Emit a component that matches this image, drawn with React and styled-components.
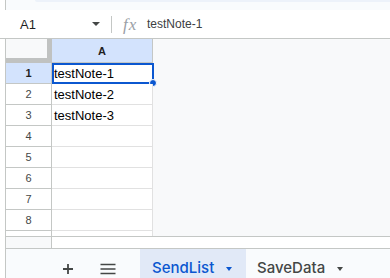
import React from "react";
import styled, { createGlobalStyle } from "styled-components";

const Global = createGlobalStyle`
  html, body { margin: 0; padding: 0; background: #ffffff; }
  body { font-family: "Liberation Sans", Arial, sans-serif; }
  * { box-sizing: border-box; }
`;

const LINE = "#c4c7c5";
const GRID = "#e1e1e1";
const SEL_BG = "#d3e3fd";
const BLUE = "#0b57d0";

const Page = styled.div`
  width: 390px;
  height: 278px;
  overflow: hidden;
  display: flex;
  flex-direction: column;
`;

const TopStrip = styled.div`
  height: 10px;
  margin-left: 5px;
  border-left: 1px solid ${LINE};
  background: #f9fbfd;
  display: flex;
  padding-left: 29px;
`;

const Pill = styled.div`
  flex: 1;
  height: 2px;
  background: #edf2fa;
  border-bottom-left-radius: 2px;
`;

const FormulaBar = styled.div`
  height: 29px;
  border-bottom: 1px solid ${LINE};
  display: flex;
  align-items: center;
  background: #fff;
`;

const NameBox = styled.div`
  width: 111px;
  padding-left: 20px;
  display: flex;
  align-items: center;
  font-size: 13px;
  line-height: 15px;
  color: #1f1f1f;
`;

const NameText = styled.span`
  flex: 1;
`;

const Caret = styled.span`
  width: 0;
  height: 0;
  border-left: ${(p) => p.$w / 2}px solid transparent;
  border-right: ${(p) => p.$w / 2}px solid transparent;
  border-top: ${(p) => p.$h}px solid ${(p) => p.$color || "#444746"};
  margin-right: ${(p) => p.$mr || 0}px;
  flex: none;
`;

const Divider = styled.div`
  width: 1px;
  height: 17px;
  background: ${LINE};
  margin-right: 11px;
`;

const Fx = styled.span`
  font-family: "Liberation Serif", "Times New Roman", serif;
  font-style: italic;
  font-size: 17px;
  line-height: 15px;
  letter-spacing: 1px;
  color: #9aa0a6;
  width: 24px;
  flex: none;
`;

const FormulaText = styled.span`
  font-size: 12px;
  line-height: 15px;
  color: #3c4043;
`;

const Main = styled.div`
  margin-left: 5px;
  border-left: 1px solid ${LINE};
  flex: 1;
  display: flex;
  flex-direction: column;
`;

const Sheet = styled.div`
  display: flex;
  border-bottom: 1px solid ${LINE};
`;

const Grid = styled.div`
  display: grid;
  grid-template-columns: 46px 101px;
  grid-template-rows: 24px repeat(8, 21px) 5px;
`;

const OffGrid = styled.div`
  flex: 1;
  background: #f8f9fa;
`;

const Corner = styled.div`
  background: #f8f9fa;
  box-shadow: inset -5px 0 0 #c0c2c1, inset 0 -5px 0 #c0c2c1;
`;

const ColHeader = styled.div`
  background: ${SEL_BG};
  border-right: 1px solid ${LINE};
  border-bottom: 1px solid ${LINE};
  display: flex;
  align-items: center;
  justify-content: center;
  font-size: 11px;
  font-weight: bold;
  color: #1f1f1f;
  padding-top: 1px;
`;

const RowHeader = styled.div`
  background: ${(p) => (p.$active ? SEL_BG : "#fff")};
  border-right: 1px solid ${LINE};
  border-bottom: ${(p) => (p.$last ? "none" : `1px solid ${LINE}`)};
  display: flex;
  align-items: center;
  justify-content: center;
  font-size: 11px;
  font-weight: ${(p) => (p.$active ? "bold" : "normal")};
  color: ${(p) => (p.$active ? "#1f1f1f" : "#444746")};
`;

const Cell = styled.div`
  position: relative;
  background: #fff;
  border-right: 1px solid ${GRID};
  border-bottom: ${(p) => (p.$last ? "none" : `1px solid ${GRID}`)};
  display: flex;
  align-items: flex-end;
  padding: 0 0 2px 2px;
  font-size: 13px;
  line-height: 15px;
  color: #000;
  white-space: nowrap;
`;

const Selection = styled.div`
  position: absolute;
  top: 0;
  left: 0;
  right: -2px;
  bottom: -1px;
  border: 2px solid ${BLUE};
  pointer-events: none;
`;

const Handle = styled.div`
  position: absolute;
  right: -5px;
  bottom: -5px;
  width: 8px;
  height: 8px;
  border-radius: 50%;
  background: ${BLUE};
  border: 1px solid #fff;
`;

const ScrollRow = styled.div`
  height: 12px;
  display: flex;
  border-bottom: 1px solid ${LINE};
`;

const ScrollCorner = styled.div`
  width: 46px;
  background: #f8f9fa;
  border-right: 1px solid ${LINE};
`;

const TabBar = styled.div`
  flex: 1;
  background: #f9fbfd;
  display: flex;
  align-items: stretch;
  padding-left: 42px;
`;

const IconButton = styled.div`
  width: 40px;
  display: flex;
  justify-content: center;
  padding-top: 14px;
  flex: none;
`;

const Tab = styled.div`
  width: ${(p) => p.$w}px;
  flex: none;
  display: flex;
  align-items: flex-start;
  margin-left: ${(p) => p.$ml || 0}px;
  padding: 10px 0 0 ${(p) => p.$pl}px;
  background: ${(p) => (p.$active ? "#e1e9f7" : "transparent")};
`;

const TabLabel = styled.span`
  font-family: Inter, Roboto, "Liberation Sans", sans-serif;
  font-size: 15px;
  line-height: 18px;
  font-weight: 500;
  color: ${(p) => (p.$active ? BLUE : "#444746")};
  margin-right: ${(p) => p.$gap}px;
`;

const TabCaretWrap = styled.span`
  display: flex;
  align-items: center;
  height: 18px;
  padding-top: 1px;
`;

const notes = ["testNote-1", "testNote-2", "testNote-3", "", "", "", "", ""];

export default function App() {
  return (
    <Page>
      <Global />
      <TopStrip>
        <Pill />
      </TopStrip>
      <FormulaBar>
        <NameBox>
          <NameText>A1</NameText>
          <Caret $w={8} $h={4} $mr={11} />
        </NameBox>
        <Divider />
        <Fx>fx</Fx>
        <FormulaText>testNote-1</FormulaText>
      </FormulaBar>
      <Main>
        <Sheet>
          <Grid>
            <Corner />
            <ColHeader>A</ColHeader>
            {notes.map((n, i) => (
              <React.Fragment key={i}>
                <RowHeader $active={i === 0}>{i + 1}</RowHeader>
                <Cell>
                  {n}
                  {i === 0 && (
                    <Selection>
                      <Handle />
                    </Selection>
                  )}
                </Cell>
              </React.Fragment>
            ))}
            <RowHeader $last />
            <Cell $last />
          </Grid>
          <OffGrid />
        </Sheet>
        <ScrollRow>
          <ScrollCorner />
        </ScrollRow>
        <TabBar>
          <IconButton>
            <svg width="12" height="12" viewBox="0 0 12 12">
              <path d="M6 1v10M1 6h10" stroke="#444746" strokeWidth="1.8" fill="none" />
            </svg>
          </IconButton>
          <IconButton>
            <svg width="16" height="12" viewBox="0 0 16 12">
              <path d="M0.5 1.5h15M0.5 6h15M0.5 10.5h15" stroke="#444746" strokeWidth="1.6" fill="none" />
            </svg>
          </IconButton>
          <Tab $active $w={106} $ml={12} $pl={12}>
            <TabLabel $active $gap={12}>SendList</TabLabel>
            <TabCaretWrap>
              <Caret $w={7} $h={4} $color={BLUE} />
            </TabCaretWrap>
          </Tab>
          <Tab $w={110} $pl={11}>
            <TabLabel $gap={12}>SaveData</TabLabel>
            <TabCaretWrap>
              <Caret $w={7} $h={4} />
            </TabCaretWrap>
          </Tab>
        </TabBar>
      </Main>
    </Page>
  );
}
